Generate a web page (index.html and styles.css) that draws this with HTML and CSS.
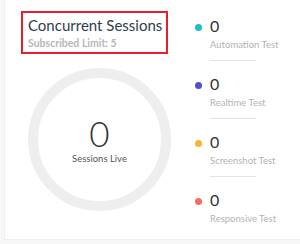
FILE: index.html
```html
<!DOCTYPE html>
<html lang="en">
<head>
    <meta charset="UTF-8">
    <title>Concurrent Sessions</title>
    <link rel="stylesheet" href="styles.css">
</head>
<body>
    <div class="card">
        <div class="left">
            <div class="header">
                <h2>Concurrent Sessions</h2>
                <p>Subscribed Limit: 5</p>
            </div>
            <div class="ring">
                <span class="live-count">0</span>
                <span class="live-label">Sessions Live</span>
            </div>
        </div>
        <ul class="types">
            <li>
                <span class="dot teal"></span>
                <div class="info">
                    <span class="count">0</span>
                    <span class="label">Automation Test</span>
                </div>
            </li>
            <li>
                <span class="dot blue"></span>
                <div class="info">
                    <span class="count">0</span>
                    <span class="label">Realtime Test</span>
                </div>
            </li>
            <li>
                <span class="dot orange"></span>
                <div class="info">
                    <span class="count">0</span>
                    <span class="label">Screenshot Test</span>
                </div>
            </li>
            <li>
                <span class="dot red"></span>
                <div class="info">
                    <span class="count">0</span>
                    <span class="label">Responsive Test</span>
                </div>
            </li>
        </ul>
    </div>
</body>
</html>
```

FILE: styles.css
```css
body {
    margin: 0;
    background: #f7f7f7;
    font-family: Lato, "Open Sans", sans-serif;
}
.card {
    display: flex;
    margin-left: 4px;
    height: 240px;
    background: #fff;
    border-left: 1px solid #eeeeee;
    border-bottom: 1px solid #eeeeee;
    box-sizing: border-box;
}
.left {
    width: 181px;
    padding: 11px 0 0 16px;
    box-sizing: border-box;
}
.header {
    display: inline-block;
    border: 2px solid #e3202d;
    padding: 3px 4px 2px 5px;
}
.header h2 {
    margin: 0;
    font-size: 15px;
    font-weight: 400;
    color: #2f3d4c;
    line-height: 19px;
}
.header p {
    margin: 2px 0 0;
    font-size: 10.5px;
    font-weight: 700;
    color: #b8b8b8;
    line-height: 13px;
}
.ring {
    width: 143px;
    height: 143px;
    margin: 14px 0 0 7px;
    padding-bottom: 2px;
    border: 10px solid #eeeeee;
    border-radius: 50%;
    box-sizing: border-box;
    display: flex;
    flex-direction: column;
    align-items: center;
    justify-content: center;
}
.live-count {
    font-size: 35px;
    font-weight: 300;
    color: #333;
    line-height: 40px;
}
.live-label {
    font-size: 9.5px;
    color: #555;
    line-height: 12px;
}
.types {
    list-style: none;
    margin: 0;
    padding: 16px 0 0 9px;
}
.types li {
    display: flex;
    align-items: flex-start;
    height: 58px;
}
.dot {
    width: 7px;
    height: 7px;
    border-radius: 50%;
    margin-top: 8px;
    margin-right: 8px;
}
.teal { background: #1bbfcc; }
.blue { background: #4e4fd1; }
.orange { background: #fbb22f; }
.red { background: #f86c5a; }
.info {
    display: flex;
    flex-direction: column;
    width: 46px;
    padding-bottom: 8px;
    border-bottom: 1px solid #e3e3e3;
    white-space: nowrap;
}
.types li:last-child .info {
    border-bottom: none;
}
.count {
    font-size: 16px;
    color: #333;
    line-height: 20px;
}
.label {
    font-size: 9.5px;
    color: #b3b3b3;
    line-height: 14px;
    margin-top: 2px;
}
```
